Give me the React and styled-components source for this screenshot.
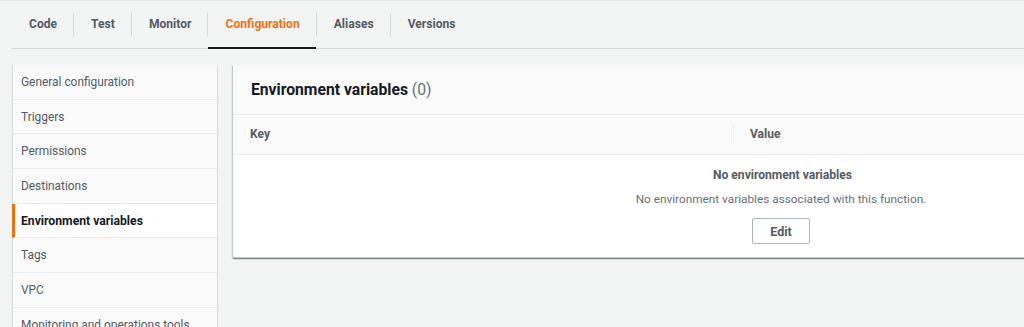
import styled, { createGlobalStyle } from 'styled-components'

const GlobalStyle = createGlobalStyle`
   html, body {
      margin: 0;
      padding: 0;
      background: #f2f3f3;
      overflow: hidden;
      font-family: Roboto, 'Liberation Sans', sans-serif;
   }
   * {
      box-sizing: border-box;
   }
`

const tabs = ['Code', 'Test', 'Monitor', 'Configuration', 'Aliases', 'Versions']
const menu = [
   'General configuration',
   'Triggers',
   'Permissions',
   'Destinations',
   'Environment variables',
   'Tags',
   'VPC',
   'Monitoring and operations tools',
]

const App = () => {
   return (
      <Page>
         <GlobalStyle />
         <TabBar>
            {tabs.map((tab, i) => (
               <Tab key={tab} active={tab === 'Configuration'} first={i === 0}>
                  {tab}
               </Tab>
            ))}
         </TabBar>
         <Content>
            <SideNav>
               {menu.map((item) => (
                  <NavItem key={item} active={item === 'Environment variables'}>
                     {item}
                  </NavItem>
               ))}
            </SideNav>
            <Panel>
               <PanelHeader>
                  <Title>
                     Environment variables <Count>(0)</Count>
                  </Title>
               </PanelHeader>
               <TableHead>
                  <HeadCell width="500px">Key</HeadCell>
                  <HeadCell divided>Value</HeadCell>
               </TableHead>
               <EmptyState>
                  <EmptyTitle>No environment variables</EmptyTitle>
                  <EmptyText>
                     No environment variables associated with this function.
                  </EmptyText>
                  <Button>Edit</Button>
               </EmptyState>
            </Panel>
         </Content>
      </Page>
   )
}

export default App

const Page = styled.div`
   width: 1024px;
   height: 327px;
   display: flex;
   flex-direction: column;
   border-top: 1px solid #e6e8e8;
   padding-left: 11px;
   overflow: hidden;
`
const TabBar = styled.div`
   display: flex;
   align-items: center;
   height: 48px;
   border-bottom: 1px solid #d5dbdb;
   flex-shrink: 0;
`
const Tab = styled.div`
   position: relative;
   height: 100%;
   display: flex;
   align-items: center;
   padding: 0 16px 0 17px;
   padding-left: ${(p) => (p.first ? '18px' : '17px')};
   font-size: 12.1px;
   font-weight: 700;
   color: ${(p) => (p.active ? '#ec7211' : '#545b64')};
   border-bottom: 2px solid ${(p) => (p.active ? '#16191f' : 'transparent')};
   margin-bottom: -1px;
   &:not(:first-child)::before {
      content: '';
      position: absolute;
      left: -1px;
      top: 11px;
      height: 24px;
      width: 1px;
      background: #d5dbdb;
   }
   & + & {
      margin-left: 1px;
   }
`
const Content = styled.div`
   display: flex;
   align-items: flex-start;
   gap: 15px;
   padding-top: 16px;
   padding-left: 1px;
   flex: 1;
`
const SideNav = styled.div`
   width: 206px;
   flex-shrink: 0;
   background: #fafafa;
   border-left: 1px solid #d5dbdb;
   border-right: 1px solid #d5dbdb;
   display: flex;
   flex-direction: column;
`
const NavItem = styled.div`
   height: 34.7px;
   display: flex;
   align-items: center;
   padding-left: ${(p) => (p.active ? '6px' : '8px')};
   font-size: ${(p) => (p.active ? '12.2px' : '11.9px')};
   white-space: nowrap;
   font-weight: ${(p) => (p.active ? 700 : 400)};
   color: ${(p) => (p.active ? '#16191f' : '#545b64')};
   background: ${(p) => (p.active ? '#ffffff' : '#fafafa')};
   border-bottom: 1px solid #eaeded;
   border-left: ${(p) => (p.active ? '3px solid #ec7211' : 'none')};
   margin-left: ${(p) => (p.active ? '-1px' : '0')};
`
const Panel = styled.div`
   width: 1096px;
   flex-shrink: 0;
   background: #ffffff;
   box-shadow: 0 1px 1px 0 rgba(0, 28, 36, 0.3),
      1px 1px 1px 0 rgba(0, 28, 36, 0.15),
      -1px 1px 1px 0 rgba(0, 28, 36, 0.15);
   border-bottom: 1px solid #c4c9cc;
`
const PanelHeader = styled.div`
   height: 50px;
   display: flex;
   align-items: center;
   padding: 0 18px;
   background: #fafafa;
   border-bottom: 1px solid #eaeded;
`
const Title = styled.h2`
   margin: 0;
   font-size: 15.7px;
   font-weight: 700;
   color: #16191f;
`
const Count = styled.span`
   font-weight: 400;
   color: #687078;
`
const TableHead = styled.div`
   display: flex;
   height: 40px;
   background: #fafafa;
   border-bottom: 1px solid #eaeded;
`
const HeadCell = styled.div`
   position: relative;
   display: flex;
   align-items: center;
   width: ${(p) => p.width || 'auto'};
   flex: ${(p) => (p.width ? '0 0 auto' : '1')};
   padding: 0 17px 1px 17px;
   font-size: 12px;
   font-weight: 700;
   color: #545b64;
   &::before {
      content: '';
      display: ${(p) => (p.divided ? 'block' : 'none')};
      position: absolute;
      left: 0;
      top: 10px;
      height: 19px;
      width: 1px;
      background: #eaeded;
   }
`
const EmptyState = styled.div`
   display: flex;
   flex-direction: column;
   align-items: center;
   padding: 10px 0 13px 0;
`
const EmptyTitle = styled.div`
   line-height: 20px;
   font-size: 12.1px;
   font-weight: 700;
   color: #545b64;
   margin-left: 3px;
`
const EmptyText = styled.div`
   margin-top: 4px;
   line-height: 20px;
   font-size: 11.8px;
   color: #687078;
`
const Button = styled.button`
   margin-top: 9px;
   width: 58px;
   height: 26px;
   background: #ffffff;
   border: 1px solid #aab7b8;
   border-radius: 2px;
   font-family: Roboto, 'Liberation Sans', sans-serif;
   font-size: 12.5px;
   font-weight: 700;
   color: #545b64;
   padding: 0;
`
